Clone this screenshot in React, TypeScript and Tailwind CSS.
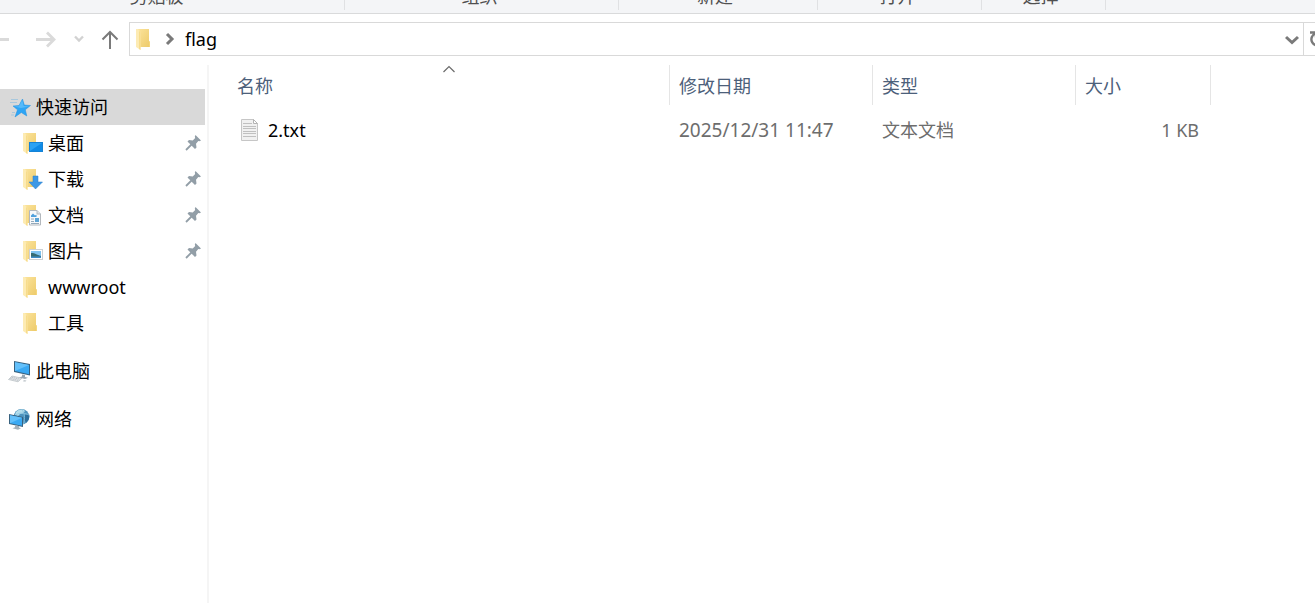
import React, { useId } from "react";

type Badge = "desktop" | "downloads" | "documents" | "pictures";

interface QuickItem {
  label: string;
  badge?: Badge;
}

const quickItems: QuickItem[] = [
  { label: "桌面", badge: "desktop" },
  { label: "下载", badge: "downloads" },
  { label: "文档", badge: "documents" },
  { label: "图片", badge: "pictures" },
  { label: "wwwroot" },
  { label: "工具" },
];

const ribbonGroups = [
  { label: "剪贴板", className: "w-[345px] pr-[31px]" },
  { label: "组织", className: "w-[274px] pr-1" },
  { label: "新建", className: "w-[199px] pr-1.5" },
  { label: "打开", className: "w-[164px] pr-1" },
  { label: "选择", className: "w-[124px] pr-1.5" },
];

const files = [{ name: "2.txt", modified: "2025/12/31 11:47", type: "文本文档", size: "1 KB" }];

const FolderIcon: React.FC<{ badge?: Badge }> = ({ badge }) => {
  const id = useId();
  return (
    <svg viewBox="0 0 24 24" className="h-6 w-6 shrink-0" aria-hidden="true">
      <defs>
        <linearGradient id={id} x1="0" y1="0" x2="1" y2="1">
          <stop offset="0" stopColor="#fbe39b" />
          <stop offset="1" stopColor="#edca69" />
        </linearGradient>
      </defs>
      <path d="M3 2h11v12l1 1v5H3z" fill={`url(#${id})`} />
      <path d="M14 14l1 1v5h-1z" fill="#f5d77d" />
      <path d="M1 2h2l2.500 3v18L1 20z" fill="#fdebb3" />
      <path d="M5.500 5v18l-1.500-1V4z" fill="#f7dc8c" />
      {badge === "desktop" && (
        <>
          <rect x="7" y="11" width="14" height="10" fill="#1583d6" />
          <path d="M8 12h12v8H8z" fill="#2ba2f3" />
          <path d="M8 20L20 12v8z" fill="#0f8ae6" />
        </>
      )}
      {badge === "downloads" && (
        <path d="M11 9h5v6h4.500L13.500 22 7 15h4z" fill="#3c98e6" stroke="#2a7fca" strokeWidth="0.500" />
      )}
      {badge === "documents" && (
        <>
          <path d="M7.500 7.500h7.500l3.500 3.500v11h-11z" fill="#f7f9fb" stroke="#b3b8bd" />
          <path d="M15 7.500V11h3.500" fill="#dfe4e9" stroke="#b3b8bd" />
          <path d="M9 12.500l2-2 2 2 1.500-1v2.500H9z" fill="#4fa0dc" />
          <path d="M9 16h3M9 18.500h3M9 20.500h8" stroke="#94a9bb" />
          <rect x="13" y="15" width="4" height="4" fill="#5fa5d6" />
        </>
      )}
      {badge === "pictures" && (
        <>
          <rect x="7.500" y="10.500" width="13" height="10" fill="#fff" stroke="#cdd0d3" />
          <path d="M9 12h10v7H9z" fill="#7fc3f0" />
          <path d="M9 14c3-.500 5 1.500 10 3v2H9z" fill="#356b72" />
          <path d="M9 17.500h10V19H9z" fill="#3e8cc7" />
        </>
      )}
    </svg>
  );
};

const StarIcon = () => (
  <svg viewBox="0 0 24 24" className="h-6 w-6 shrink-0" aria-hidden="true">
    <path d="M14.500 4l1.800 6 6.200.500-5.200 4.200 1.500 6.300-5.500-3.500-6.300 4.500 2.500-7.200L5 11l6-.500z" fill="#2ea5f5" stroke="#2390df" strokeWidth="0.500" />
    <path d="M14.200 5l1.500 6 5.300.500-8 1.500-7-1.500 5-.300z" fill="#56bafa" />
    <path d="M3 4.500h7M2 7.500h7M4 17.500h3M3 20h3" stroke="#9cc4de" strokeWidth="0.800" />
  </svg>
);

const ComputerIcon = () => (
  <svg viewBox="0 0 24 24" className="h-6 w-6 shrink-0" aria-hidden="true">
    <path d="M6 2l16 3v11.500L6 13z" fill="#39627f" />
    <path d="M7 3.200l14 2.700v9.300L7 12z" fill="#3aa9f3" />
    <path d="M7 3.200l14 2.700L7 12z" fill="#63c0fa" />
    <path d="M14 15.500l3 .500v2l3 .800-3 1.200-6-1.500 3-1z" fill="#9aa8b3" />
    <path d="M4 17l10 2.200L10 22.800 0.500 20.500z" fill="#e2e5e8" stroke="#aab1b7" strokeWidth="0.600" />
    <path d="M3.500 18.200l8.500 2M2.300 19.500l8.500 2" stroke="#a9b1b8" strokeWidth="0.700" strokeDasharray="1.500 0.700" />
    <path d="M16 21l2.500.500-1.200 1.300-2.500-.500z" fill="#c3c9ce" />
  </svg>
);

const NetworkIcon = () => (
  <svg viewBox="0 0 24 24" className="h-6 w-6 shrink-0" aria-hidden="true">
    <circle cx="13.500" cy="9.800" r="7.800" fill="#4d93bd" />
    <path d="M8 5c3-3 7-3 9-1l-2 2.500-3 .500-2 2-3-1z" fill="#b3dcea" />
    <path d="M17 8l4.300-.500c.500 3-.500 6-3 8L15.500 12z" fill="#2d6f9c" />
    <path d="M8 8c4-3 9-2 13 0M13.500 2.200c3 3 4 9 2 15" fill="none" stroke="#8cc5df" strokeWidth="0.800" />
    <path d="M1 7l14 3v10L1 17z" fill="#39627f" />
    <path d="M2 8.200l12 2.600v8L2 16.200z" fill="#3aa9f3" />
    <path d="M2 8.200l12 2.600L2 16.200z" fill="#63c0fa" />
    <path d="M7 18.300l4 .800v1.500l2 .700-3 1.500-5.500-1.500 2.500-1z" fill="#a5b1ba" />
  </svg>
);

const PinIcon = () => (
  <svg viewBox="0 0 16 16" className="h-4 w-4 shrink-0" aria-hidden="true">
    <path d="M10.500 0l5.500 5.500-1.500.800-1.200-.300-2.300 2.800.500 3.700-1.500 1.500L2.500 6.500 4 5l3.700.500L10.200 3 9.800 1.500z" fill="#929ea7" />
    <path d="M6.500 9.500L1 15" stroke="#929ea7" strokeWidth="1.800" />
  </svg>
);

const TextFileIcon = () => (
  <svg viewBox="0 0 20 24" className="h-6 w-5 shrink-0" aria-hidden="true">
    <path d="M1.500 1.500h12l4 4v17h-16z" fill="#f1f1f1" stroke="#c6c6c6" />
    <path d="M13.500 1.500v4h4z" fill="#fff" stroke="#b4b4b4" />
    <path d="M3 5.500h9M3 8.500h13M3 10.500h13M3 13.500h13M3 15.500h13M3 18.500h13" stroke="#c0c0c0" />
  </svg>
);

const AddressBar = () => (
  <div className="flex h-[42px] pt-2">
    <nav aria-label="导航" className="flex w-[129px] shrink-0 items-center">
      <button aria-label="后退" className="flex w-[9px] justify-end overflow-hidden">
        <svg viewBox="0 0 20 20" className="h-5 w-5 shrink-0" fill="none" stroke="#dadada" strokeWidth="3">
          <path d="M20 10.500H2M9 3.500l-7 7 7 7" />
        </svg>
      </button>
      <button aria-label="前进" className="ml-[27px]">
        <svg viewBox="0 0 20 20" className="h-5 w-5" fill="none" stroke="#dadada" strokeWidth="2.800">
          <path d="M0 10.500h18M11 3.500l7 7-7 7" />
        </svg>
      </button>
      <button aria-label="最近浏览的位置" className="ml-[18px]">
        <svg viewBox="0 0 10 10" className="h-2.5 w-2.5" fill="none" stroke="#d2d2d2" strokeWidth="2.400">
          <path d="M1 2.500l4 4 4-4" />
        </svg>
      </button>
      <button aria-label="上移" className="ml-[17px]">
        <svg viewBox="0 0 18 20" className="h-5 w-[18px]" fill="none" stroke="#7a7a7a" strokeWidth="2">
          <path d="M9 20.500V3M1.500 10.500L9 3l7.500 7.500" />
        </svg>
      </button>
    </nav>
    <div className="flex min-w-0 flex-1 items-center border border-r-0 border-[#d9d9d9] pl-[5px]">
      <FolderIcon />
      <button aria-label="展开" className="ml-1.5">
        <svg viewBox="0 0 10 14" className="h-3.5 w-2.5" fill="none" stroke="#7a7a7a" strokeWidth="3">
          <path d="M2 2l5 5-5 5" />
        </svg>
      </button>
      <button className="ml-2.5">flag</button>
      <button aria-label="以前的位置" className="ml-auto mr-1">
        <svg viewBox="0 0 14 12" className="h-3 w-3.5" fill="none" stroke="#7a7a7a" strokeWidth="3">
          <path d="M1 4l6 5.500L13 4" />
        </svg>
      </button>
      <button aria-label="刷新" className="flex w-3 items-center self-stretch overflow-hidden border-l border-[#d9d9d9] pl-1.5">
        <svg viewBox="0 0 16 18" className="h-[18px] w-4 shrink-0" fill="none" stroke="#7a7a7a" strokeWidth="2.400">
          <path d="M0 2.500h6v5M5.500 3.500a6.200 6.200 0 1 0 6 1" />
        </svg>
      </button>
    </div>
  </div>
);

const Sidebar = () => (
  <aside className="w-[209px] shrink-0 border-r-2 border-[#f5f5f5] pt-6">
    <button className="flex h-9 w-[205px] items-center gap-1 bg-[#d9d9d9] pl-2">
      <StarIcon />
      快速访问
    </button>
    <ul>
      {quickItems.map((item) => (
        <li key={item.label}>
          <button className="flex h-9 w-[205px] items-center gap-0.5 pl-[22px] pr-1 text-left">
            <FolderIcon badge={item.badge} />
            <span className="flex-1">{item.label}</span>
            {item.badge && <PinIcon />}
          </button>
        </li>
      ))}
    </ul>
    <button className="mt-3 flex h-9 w-[205px] items-center gap-1 pl-2">
      <ComputerIcon />
      此电脑
    </button>
    <button className="mt-3 flex h-9 w-[205px] items-center gap-1 pl-2">
      <NetworkIcon />
      网络
    </button>
  </aside>
);

const FileList = () => (
  <main className="min-w-0 flex-1 pl-[19px]">
    <table className="w-[983px] table-fixed border-separate border-spacing-0">
      <thead>
        <tr className="h-10 text-left text-[#4c607a] [&>th]:border-r [&>th]:border-[#e5e5e5] [&>th]:pl-[9px] [&>th]:pt-0.5 [&>th]:font-normal">
          <th className="relative w-[442px]">
            名称
            <svg viewBox="0 0 12 8" className="absolute left-1/2 top-0 h-2 w-3 -translate-x-1/2" fill="none" stroke="#6b6b6b" strokeWidth="1.200">
              <path d="M0.500 7L6 1.500 11.500 7" />
            </svg>
          </th>
          <th className="w-[203px]">修改日期</th>
          <th className="w-[203px]">类型</th>
          <th className="w-[135px]">大小</th>
        </tr>
      </thead>
      <tbody>
        {files.map((file) => (
          <tr key={file.name} className="h-[50px] text-[#6d6d6d]">
            <td className="pl-3 text-black">
              <div className="flex items-center gap-2">
                <TextFileIcon />
                {file.name}
              </div>
            </td>
            <td className="pl-[9px] text-[19px]">{file.modified}</td>
            <td className="pl-[9px]">{file.type}</td>
            <td className="pr-3 text-right">{file.size}</td>
          </tr>
        ))}
      </tbody>
    </table>
  </main>
);

export default function App() {
  return (
    <div className="flex min-h-screen flex-col overflow-hidden bg-white font-['Noto_Sans','Noto_Sans_CJK_SC',sans-serif] text-[18px] leading-6 text-black">
      <header className="flex h-3.5 items-end overflow-hidden border-b border-[#d9dadb] bg-[#f4f5f7] pb-[3px] text-[#505050]">
        {ribbonGroups.map((group) => (
          <div key={group.label} className={`flex h-6 shrink-0 justify-center border-r border-[#e0e1e3] ${group.className}`}>
            <span className="-mt-0.5">{group.label}</span>
          </div>
        ))}
      </header>
      <AddressBar />
      <div className="flex flex-1 pt-[9px]">
        <Sidebar />
        <FileList />
      </div>
    </div>
  );
}
